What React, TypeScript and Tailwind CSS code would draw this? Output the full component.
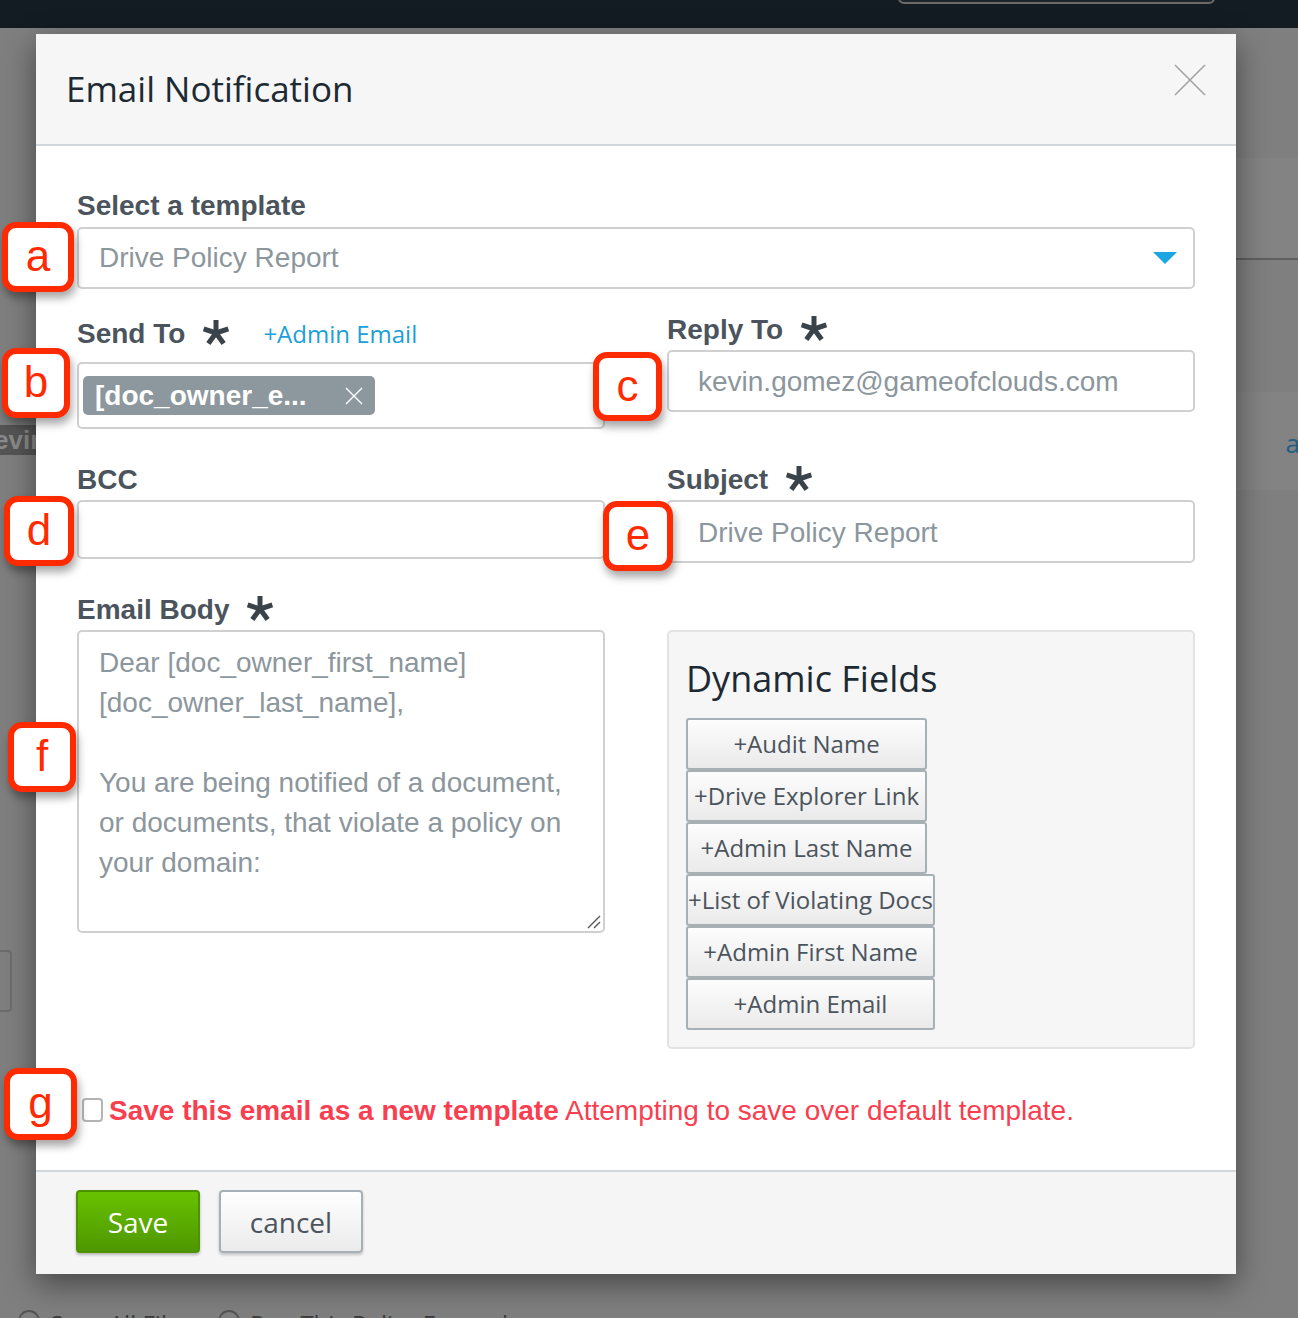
import type { ReactNode } from 'react'

const helv = { fontFamily: '"Liberation Sans", Arial, sans-serif' }
const open = { fontFamily: '"Open Sans", "Liberation Sans", sans-serif' }

function Star() {
  const arms = [-90, -18, 54, 126, 198]
  return (
    <svg width="28" height="27" viewBox="0 0 28 27" className="ml-[17px] shrink-0 translate-y-[3px]">
      {arms.map((a) => {
        const r = (a * Math.PI) / 180
        return (
          <line
            key={a}
            x1="14"
            y1="14"
            x2={14 + Math.cos(r) * 13}
            y2={14 + Math.sin(r) * 13}
            stroke="#3b434a"
            strokeWidth="5"
            strokeLinecap="butt"
          />
        )
      })}
    </svg>
  )
}

function Label({ children, star, extra }: { children: ReactNode; star?: boolean; extra?: ReactNode }) {
  return (
    <div className="flex items-baseline h-[40px] leading-[40px] text-[28px] font-bold text-[#4b545c]" style={helv}>
      <span>{children}</span>
      {star && <Star />}
      {extra}
    </div>
  )
}

function Badge({ letter, cls }: { letter: string; cls: string }) {
  return (
    <div
      className={`absolute z-20 flex items-center justify-center rounded-[14px] border-[6px] border-[#ff2a00] bg-white text-[44px] leading-none text-[#ff2a00] shadow-[2px_6px_8px_rgba(0,0,0,0.35)] ${cls}`}
      style={helv}
    >
      <span className="-mt-[2px]">{letter}</span>
    </div>
  )
}

const fields = [
  { t: '+Audit Name', w: 'w-[241px]' },
  { t: '+Drive Explorer Link', w: 'w-[241px]' },
  { t: '+Admin Last Name', w: 'w-[241px]' },
  { t: '+List of Violating Docs', w: 'w-[249px]' },
  { t: '+Admin First Name', w: 'w-[249px]' },
  { t: '+Admin Email', w: 'w-[249px]' },
]

export default function App() {
  return (
    <div className="relative w-[1298px] h-[1318px] overflow-hidden bg-[#7f7f7f]">
      {/* page behind the overlay */}
      <div className="absolute right-0 top-[158px] w-[70px] h-[100px] bg-[#838383]" />
      <div className="absolute right-0 top-[258px] w-[70px] h-[2px] bg-[#5f5f5f]" />
      <div className="absolute right-0 top-[392px] w-[70px] h-[98px] bg-[#838383]" />
      <div className="absolute right-[-2px] top-[424px] text-[26px] text-[#1f5f86]" style={open}>a</div>
      <div className="absolute left-0 top-[425px] w-[36px] h-[30px] bg-[#555] overflow-hidden">
        <span className="block -ml-[6px] text-[26px] leading-[30px] font-bold text-[#8a8a8a]" style={helv}>evir</span>
      </div>
      <div className="absolute left-[-10px] top-[950px] w-[22px] h-[62px] rounded-[4px] border-2 border-[#6c6c6c]" />
      <div className="absolute left-[18px] top-[1310px] flex gap-[10px] text-[24px] text-[#3c3c3c]" style={open}>
        <span className="w-[22px] h-[22px] rounded-full border-2 border-[#555]" />
        <span className="-mt-[4px]">Scan All Files</span>
        <span className="ml-[16px] w-[22px] h-[22px] rounded-full border-2 border-[#555]" />
        <span className="-mt-[4px]">Run This Policy Everywhere</span>
      </div>

      <div className="relative z-10 h-[28px] bg-[#121c22] overflow-hidden">
        <div className="absolute left-[898px] top-[-12px] w-[317px] h-[16px] rounded-[6px] border-2 border-[#6a6a6a] bg-[#1a242a]" />
      </div>

      <div className="relative z-10 ml-[36px] mt-[6px] w-[1200px] bg-white shadow-[0_10px_30px_rgba(0,0,0,0.45)]">
        {/* header */}
        <div className="flex justify-between items-start h-[112px] bg-[#f6f6f6] border-b-2 border-[#d1d7da] pl-[30px] pr-[30px]">
          <h1 className="mt-[35px] text-[35px] leading-[40px] text-[#1d2a33]" style={open}>Email Notification</h1>
          <svg width="32" height="32" viewBox="0 0 32 32" className="mt-[30px]">
            <path d="M1 1 L31 31 M31 1 L1 31" stroke="#a4a4a4" strokeWidth="1.6" />
          </svg>
        </div>

        {/* body */}
        <div className="px-[41px] pt-[40px] pb-[39px]">
          <Label>Select a template</Label>
          <div className="mt-[1px] h-[62px] flex items-center justify-between border-2 border-[#d0d0d0] rounded-[5px] pl-[20px] pr-[16px]">
            <span className="text-[28px] text-[#8c969d]" style={helv}>Drive Policy Report</span>
            <svg width="24" height="12" viewBox="0 0 24 12">
              <path d="M0 0 H24 L12 12 Z" fill="#1ca5e3" />
            </svg>
          </div>

          <div className="grid grid-cols-2 gap-x-[62px] items-start">
            <div className="mt-[25px]">
              <Label
                star
                extra={
                  <span className="ml-[33px] text-[24px] font-normal text-[#1ba0da]" style={open}>
                    +Admin Email
                  </span>
                }
              >
                Send To
              </Label>
              <div className="mt-[8px] border-2 border-[#d0d0d0] rounded-[5px] px-[4px] py-[12px]">
                <div className="flex items-center justify-between w-[292px] h-[39px] rounded-[5px] bg-[#8d979e] pl-[12px] pr-[12px]">
                  <span className="text-[28px] font-bold text-white" style={helv}>[doc_owner_e...</span>
                  <svg width="18" height="18" viewBox="0 0 18 18">
                    <path d="M1 1 L17 17 M17 1 L1 17" stroke="#ffffff" strokeWidth="1.4" />
                  </svg>
                </div>
              </div>
            </div>
            <div className="mt-[21px]">
              <Label star>Reply To</Label>
              <div className="h-[62px] flex items-center border-2 border-[#d0d0d0] rounded-[5px] pl-[29px]">
                <span className="mt-[2px] text-[28px] text-[#8c969d]" style={helv}>kevin.gomez@gameofclouds.com</span>
              </div>
            </div>
          </div>

          <div className="grid grid-cols-2 gap-x-[62px] items-start">
            <div className="mt-[31px]">
              <Label>BCC</Label>
              <div className="h-[59px] border-2 border-[#d0d0d0] rounded-[5px]" />
            </div>
            <div className="mt-[31px]">
              <Label star>Subject</Label>
              <div className="h-[63px] flex items-center border-2 border-[#d0d0d0] rounded-[5px] pl-[29px]">
                <span className="mt-[2px] text-[28px] text-[#8c969d]" style={helv}>Drive Policy Report</span>
              </div>
            </div>
          </div>

          <div className="grid grid-cols-2 gap-x-[62px] items-start">
            <div className="mt-[27px]">
              <Label star>Email Body</Label>
              <div className="relative h-[303px] border-2 border-[#d0d0d0] rounded-[5px] pl-[20px] pt-[11px] text-[28px] leading-[40px] text-[#8c969d]" style={helv}>
                <div>Dear [doc_owner_first_name]</div>
                <div>[doc_owner_last_name],</div>
                <div className="h-[40px]" />
                <div>You are being notified of a document,</div>
                <div>or documents, that violate a policy on</div>
                <div>your domain:</div>
                <svg width="14" height="14" viewBox="0 0 14 14" className="absolute right-[2px] bottom-[2px]">
                  <path d="M13 1 L1 13 M13 7 L7 13" stroke="#555" strokeWidth="1.4" />
                </svg>
              </div>
            </div>
            <div className="mt-[67px] border-2 border-[#e3e3e3] rounded-[5px] bg-[#f6f6f6] pl-[17px] pt-[27px] pb-[17px]">
              <h2 className="text-[36px] leading-[40px] text-[#1d2a33]" style={open}>Dynamic Fields</h2>
              <div className="mt-[19px] flex flex-col">
                {fields.map((f) => (
                  <button
                    key={f.t}
                    className={`${f.w} h-[52px] border-2 border-[#a6b0b5] rounded-[3px] bg-gradient-to-b from-[#fdfdfd] to-[#eaeaea] text-[24px] text-[#4b545c] whitespace-nowrap flex items-center justify-center`}
                    style={open}
                  >
                    {f.t}
                  </button>
                ))}
              </div>
            </div>
          </div>

          <div className="mt-[40px] h-[42px] flex items-center">
            <span className="ml-[5px] w-[21px] h-[24px] rounded-[4px] border-2 border-[#b4b4b4] bg-white shrink-0" />
            <span className="ml-[6px] mt-[2px] text-[28px] text-[#f93e4f] whitespace-nowrap" style={helv}>
              <b>Save this email as a new template</b> Attempting to save over default template.
            </span>
          </div>
        </div>

        {/* footer */}
        <div className="h-[104px] bg-[#f5f5f5] border-t-2 border-[#d1d7da] pl-[40px] pt-[18px] flex items-start gap-[19px]">
          <button
            className="w-[124px] h-[63px] rounded-[4px] border-2 border-[#4d9300] bg-gradient-to-b from-[#69c200] to-[#4e9700] text-[28px] text-white shadow-[0_2px_3px_rgba(0,0,0,0.25)]"
            style={open}
          >
            Save
          </button>
          <button
            className="w-[144px] h-[63px] rounded-[4px] border-2 border-[#a6b0b5] bg-gradient-to-b from-[#ffffff] to-[#ebebeb] text-[28px] text-[#4b545c] shadow-[0_2px_3px_rgba(0,0,0,0.2)]"
            style={open}
          >
            cancel
          </button>
        </div>
      </div>

      <Badge letter="a" cls="left-[2px] top-[222px] w-[72px] h-[70px]" />
      <Badge letter="b" cls="left-[2px] top-[348px] w-[68px] h-[70px]" />
      <Badge letter="c" cls="left-[593px] top-[352px] w-[69px] h-[69px]" />
      <Badge letter="d" cls="left-[4px] top-[496px] w-[70px] h-[70px]" />
      <Badge letter="e" cls="left-[603px] top-[501px] w-[70px] h-[70px]" />
      <Badge letter="f" cls="left-[8px] top-[722px] w-[68px] h-[70px]" />
      <Badge letter="g" cls="left-[4px] top-[1068px] w-[73px] h-[72px]" />
    </div>
  )
}
